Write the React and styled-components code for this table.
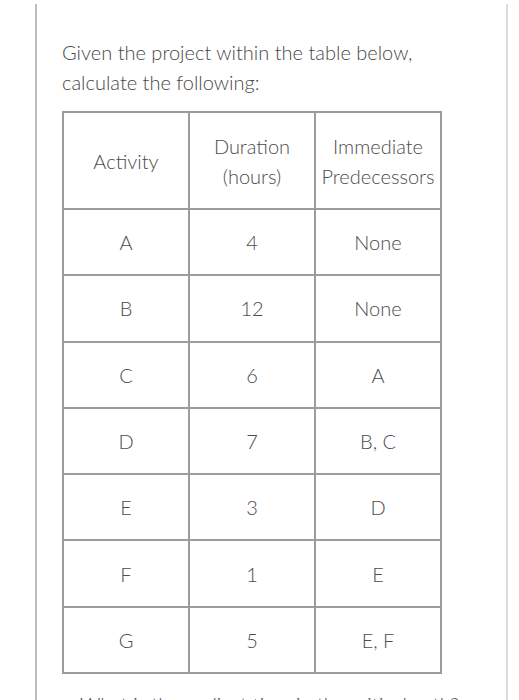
import React from 'react'
import styled, { createGlobalStyle } from 'styled-components'

const GlobalStyle = createGlobalStyle`
  html, body {
    margin: 0;
    padding: 0;
    background: #fff;
  }
  body {
    font-family: Lato, "Open Sans", sans-serif;
    overflow: hidden;
  }
`

const Page = styled.div`
  height: 700px;
  overflow: hidden;
  padding-top: 4px;
  box-sizing: border-box;
`

const Panel = styled.div`
  margin-left: 35px;
  width: 444px;
  min-height: 800px;
  border-left: 2px solid #bdbdbd;
  border-right: 2px solid #dcdcdc;
  padding: 34px 0 0 25px;
  box-sizing: content-box;
`

const Intro = styled.p`
  margin: 0 0 14px;
  font-size: 20px;
  line-height: 29.5px;
  font-weight: 300;
  color: #484848;
  width: 380px;
`

const Table = styled.table`
  border-collapse: collapse;
  width: 380px;
  table-layout: fixed;
  color: #4c4c4c;
  font-size: 20px;
  font-weight: 300;
  line-height: 30px;
`

const Cell = styled.td`
  border: 2px solid #9c9c9c;
  text-align: center;
  vertical-align: middle;
  padding: 0 2px;
  height: ${p => (p.$head ? '97px' : '66.3px')};
  box-sizing: border-box;
`

const Question = styled.p`
  margin: 15px 0 0;
  padding-left: 18px;
  font-size: 20px;
  line-height: 30px;
  font-weight: 300;
  color: #484848;
  white-space: nowrap;
`

const rows = [
  ['A', '4', 'None'],
  ['B', '12', 'None'],
  ['C', '6', 'A'],
  ['D', '7', 'B, C'],
  ['E', '3', 'D'],
  ['F', '1', 'E'],
  ['G', '5', 'E, F']
]

export default function App() {
  return (
    <Page>
      <GlobalStyle />
      <Panel>
        <Intro>
          Given the project within the table below, calculate the following:
        </Intro>
        <Table>
          <tbody>
            <tr>
              <Cell $head>Activity</Cell>
              <Cell $head>Duration<br />(hours)</Cell>
              <Cell $head>Immediate<br />Predecessors</Cell>
            </tr>
            {rows.map(r => (
              <tr key={r[0]}>
                <Cell>{r[0]}</Cell>
                <Cell>{r[1]}</Cell>
                <Cell>{r[2]}</Cell>
              </tr>
            ))}
          </tbody>
        </Table>
        <Question>
          What is the earliest time in the critical path?
        </Question>
      </Panel>
    </Page>
  )
}
